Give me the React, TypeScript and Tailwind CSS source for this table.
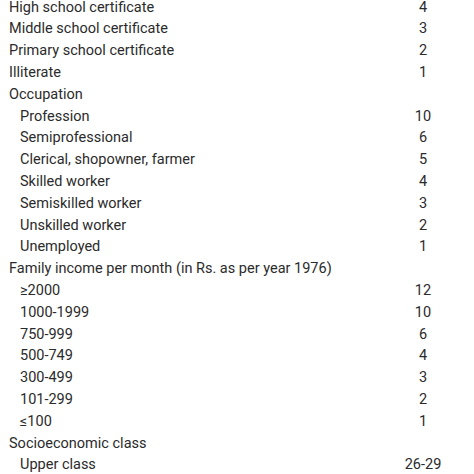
import React from "react";

type Row = { label: string; value?: string; indent?: boolean };

const rows: Row[] = [
  { label: "High school certificate", value: "4" },
  { label: "Middle school certificate", value: "3" },
  { label: "Primary school certificate", value: "2" },
  { label: "Illiterate", value: "1" },
  { label: "Occupation" },
  { label: "Profession", value: "10", indent: true },
  { label: "Semiprofessional", value: "6", indent: true },
  { label: "Clerical, shopowner, farmer", value: "5", indent: true },
  { label: "Skilled worker", value: "4", indent: true },
  { label: "Semiskilled worker", value: "3", indent: true },
  { label: "Unskilled worker", value: "2", indent: true },
  { label: "Unemployed", value: "1", indent: true },
  { label: "Family income per month (in Rs. as per year 1976)" },
  { label: "≥2000", value: "12", indent: true },
  { label: "1000-1999", value: "10", indent: true },
  { label: "750-999", value: "6", indent: true },
  { label: "500-749", value: "4", indent: true },
  { label: "300-499", value: "3", indent: true },
  { label: "101-299", value: "2", indent: true },
  { label: "≤100", value: "1", indent: true },
  { label: "Socioeconomic class" },
  { label: "Upper class", value: "26-29", indent: true },
];

export default function App() {
  return (
    <div
      className="w-[474px] h-[474px] overflow-hidden bg-white text-[#2b2b2b]"
      style={{ fontFamily: "Roboto, 'Liberation Sans', sans-serif" }}
    >
      <div className="-mt-[3px] flex flex-col">
        {rows.map((r, i) => (
          <div key={i} className="flex h-[21.8px] items-center text-[14.5px] leading-none">
            <div className={r.indent ? "flex-1 pl-[20px]" : "flex-1 pl-[9px]"}>{r.label}</div>
            <div className="w-[60px] mr-[21px] text-center">{r.value ?? ""}</div>
          </div>
        ))}
      </div>
    </div>
  );
}
